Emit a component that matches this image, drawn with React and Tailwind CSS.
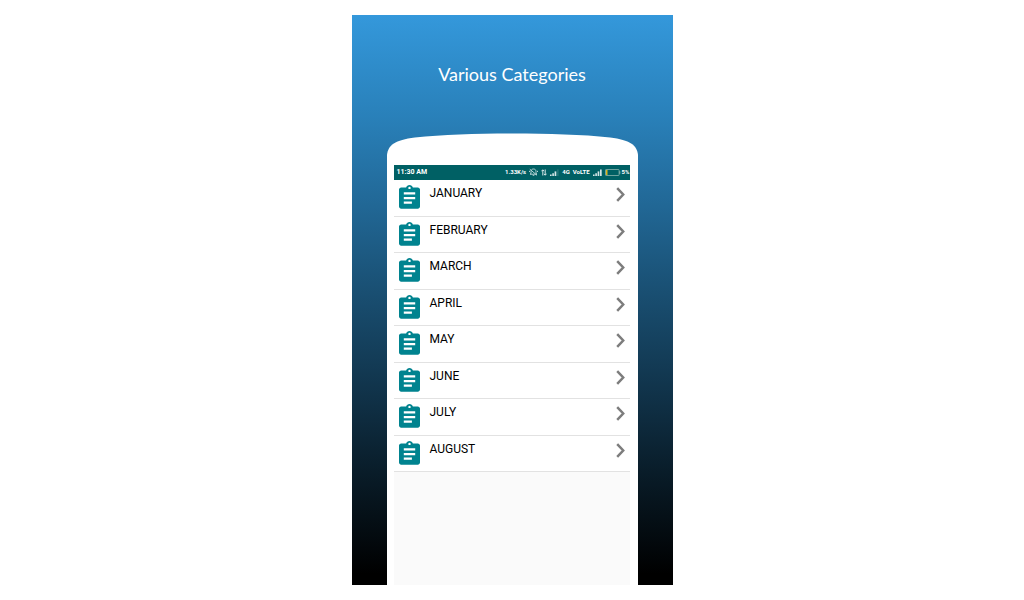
import React from "react";

const months = ["JANUARY", "FEBRUARY", "MARCH", "APRIL", "MAY", "JUNE", "JULY", "AUGUST"];

function ClipboardIcon() {
  return (
    <svg viewBox="0 0 21 24" className="h-6 w-[21px] shrink-0" aria-hidden="true">
      <path
        fill="#00838f"
        fillRule="evenodd"
        d="M2.2 2.4H7.1C7.6 .9 8.9 0 10.5 0S13.4 .9 13.9 2.4H18.8C20 2.4 21 3.4 21 4.6V21.6C21 22.8 20 23.8 18.8 23.8H2.2C1 23.8 0 22.8 0 21.6V4.6C0 3.4 1 2.4 2.2 2.4ZM10.5 1.7A1.2 1.2 0 1 0 10.5 4.1A1.2 1.2 0 1 0 10.5 1.7ZM4.8 7.2V9.5H16.2V7.2ZM4.8 11.9V14.2H16.2V11.9ZM4.8 16.5V18.8H12.9V16.5Z"
      />
    </svg>
  );
}

function ChevronIcon() {
  return (
    <svg viewBox="0 0 9 15" className="h-[15px] w-[9px] shrink-0" aria-hidden="true">
      <path d="M1.2 1.2 7.2 7.5 1.2 13.8" fill="none" stroke="#7d7d7d" strokeWidth="2.5" />
    </svg>
  );
}

function SignalIcon({ strong }) {
  return (
    <svg viewBox="0 0 9 7" className="h-[7px] w-[9px]" fill="#d5e6e7" aria-hidden="true">
      <path d="M0 5.5h1.6V7H0zM2.3 4.3h1.6V7H2.3z" />
      <path d="M4.6 2.4h1.7V7H4.6z" />
      <path d="M7 .5h1.7V7H7z" opacity={strong ? 1 : 0.15} />
    </svg>
  );
}

function StatusBar() {
  return (
    <div className="flex h-[15px] items-center justify-between bg-[#006064] pb-px pl-[3px] text-[6px] leading-none font-bold whitespace-nowrap text-white">
      <span className="text-[7px]">11:30 AM</span>
      <div className="flex items-center gap-[3px]">
        <span>1.33K/s</span>
        <svg viewBox="0 0 9 8" className="h-2 w-[9px]" fill="none" stroke="#c4dcdd" strokeWidth="0.9" aria-hidden="true">
          <path d="M2 5.5V3.6C2 1.9 3 1 4.5 1S7 1.9 7 3.6V5.5L8 6.2H1ZM3.7 7.3H5.3M.8 1.2 8 7.3M.5 4V2.8M8.5 4V2.8" />
        </svg>
        <svg viewBox="0 0 6 7" className="h-[7px] w-1.5" fill="none" stroke="#d5e6e7" strokeWidth="1" aria-hidden="true">
          <path d="M1.8 6.5V.9M.4 2.3 1.8.8M4.2.5V6.1M5.6 4.7 4.2 6.2L3 4.9M1.8.8 3 2.1" />
        </svg>
        <SignalIcon />
        <span>4G</span>
        <span>VoLTE</span>
        <SignalIcon strong />
        <svg viewBox="0 0 16 7" className="h-[7px] w-4" aria-hidden="true">
          <rect x="0.5" y="0.5" width="13.6" height="6" rx="0.6" fill="none" stroke="#9dc0b8" strokeWidth="0.7" />
          <rect x="1" y="1" width="1.5" height="5" fill="#d8b51d" />
          <path d="M14.8 2.2V4.8" stroke="#9dc0b8" strokeWidth="0.9" />
        </svg>
        <span className="-ml-0.5">5%</span>
      </div>
    </div>
  );
}

export default function App() {
  return (
    <div className="flex min-h-screen justify-center bg-white py-[15px]">
      <main className="flex w-full max-w-[321px] flex-col bg-[linear-gradient(180deg,#3498db_0%,#2980b9_18%,#000000_98%)] font-['Roboto',sans-serif]">
        <h1 className="pt-[46px] text-center font-['Lato',sans-serif] text-lg leading-[26px] font-normal text-white">
          Various Categories
        </h1>
        <section className="mx-[35px] mt-[46px] flex flex-1 flex-col">
          <svg viewBox="0 0 252 32" preserveAspectRatio="none" className="block h-8 w-full" aria-hidden="true">
            <path fill="#fff" d="M0 32V22C1 12 8 7 28 4.5C56 1.5 90 .5 126 .5S196 1.5 224 4.5C244 7 251 12 252 22V32Z" />
          </svg>
          <div className="flex flex-1 flex-col bg-white pr-2 pl-[7px]">
            <StatusBar />
            <nav className="grid h-[292px] auto-rows-fr">
              {months.map((month) => (
                <a
                  key={month}
                  href={"#" + month.toLowerCase()}
                  className="flex items-start border-b border-[#e2e2e2] bg-white px-[5px] pt-[5px] text-black"
                >
                  <ClipboardIcon />
                  <span className="ml-2.5 flex-1 text-xs leading-4">{month}</span>
                  <span className="pt-[2px]">
                    <ChevronIcon />
                  </span>
                </a>
              ))}
            </nav>
            <div className="flex-1 bg-[#fafafa]" />
          </div>
        </section>
      </main>
    </div>
  );
}
